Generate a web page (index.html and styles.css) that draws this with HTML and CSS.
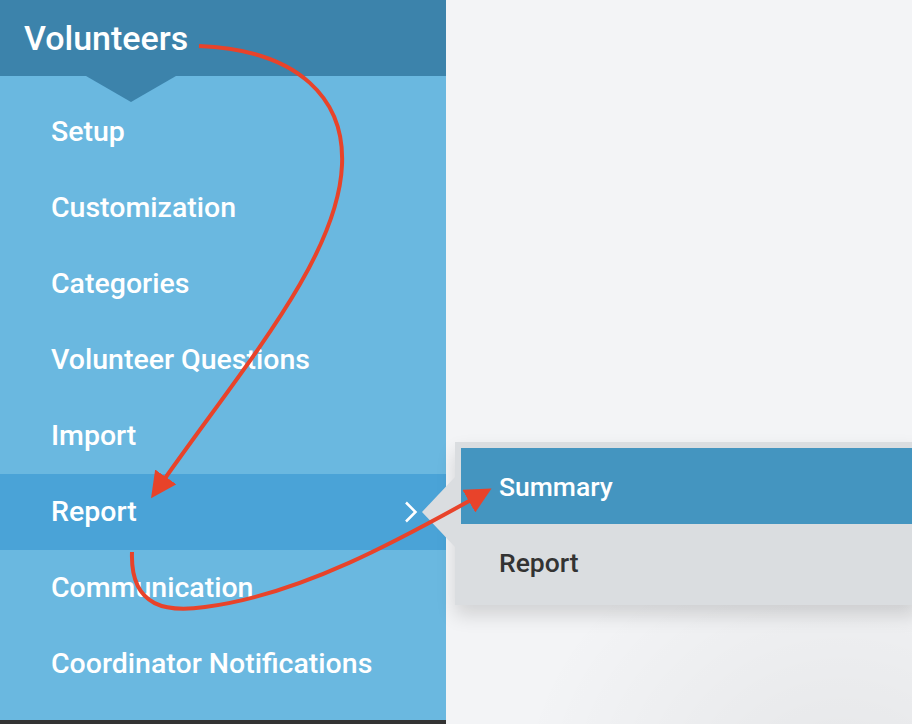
FILE: index.html
```html
<!DOCTYPE html>
<html lang="en">
<head>
    <meta charset="UTF-8">
    <meta name="viewport" content="width=device-width, initial-scale=1.0">
    <title>Volunteers</title>
    <link rel="stylesheet" href="styles.css">
</head>
<body>
    <div class="page">
        <nav class="sidebar">
            <div class="sidebar-title">Volunteers</div>
            <ul class="menu">
                <li class="menu-item">Setup</li>
                <li class="menu-item">Customization</li>
                <li class="menu-item">Categories</li>
                <li class="menu-item">Volunteer Questions</li>
                <li class="menu-item">Import</li>
                <li class="menu-item active">
                    <span>Report</span>
                    <svg class="chevron" width="14" height="24" viewBox="0 0 14 24">
                        <polyline points="2,2.5 11.5,12 2,21.5" fill="none" stroke="#fff" stroke-width="2.5"/>
                    </svg>
                </li>
                <li class="menu-item">Communication</li>
                <li class="menu-item">Coordinator Notifications</li>
            </ul>
            <div class="sidebar-foot"></div>
        </nav>
        <main class="content"></main>
    </div>

    <!-- flyout for the Report entry -->
    <div class="flyout">
        <div class="flyout-item selected">Summary</div>
        <div class="flyout-item">Report</div>
    </div>

    <!-- red hand-drawn arrows -->
    <svg class="annotations" width="912" height="724" viewBox="0 0 912 724">
        <defs>
            <marker id="head" viewBox="0 0 10 10" refX="8" refY="5" markerWidth="6.5" markerHeight="6.5" markerUnits="strokeWidth" orient="auto">
                <path d="M0,0 L10,5 L0,10 z" fill="#e8432a"/>
            </marker>
        </defs>
        <path d="M199,46 C300,50 345,100 342,165 C338,260 240,370 154,494" fill="none" stroke="#e8432a" stroke-width="4" marker-end="url(#head)"/>
        <path d="M132,552 C130,610 170,612 205,607 C300,595 400,540 487,491" fill="none" stroke="#e8432a" stroke-width="4" marker-end="url(#head)"/>
    </svg>
</body>
</html>
```

FILE: styles.css
```css
html, body {
    margin: 0;
    padding: 0;
    height: 100%;
    overflow: hidden;
    font-family: Roboto, "Noto Sans", sans-serif;
}
.page {
    display: flex;
    height: 724px;
}
.sidebar {
    width: 446px;
    flex-shrink: 0;
    background-color: #6ab8e0;
    display: flex;
    flex-direction: column;
}
.sidebar-title {
    position: relative;
    height: 76px;
    line-height: 76px;
    padding-left: 24px;
    background-color: #3c83ab;
    color: #fff;
    font-size: 34px;
    font-weight: 500;
}
/* small notch under the title bar */
.sidebar-title::after {
    content: "";
    position: absolute;
    left: 86px;
    top: 76px;
    border-left: 45px solid transparent;
    border-right: 45px solid transparent;
    border-top: 26px solid #3c83ab;
}
.menu {
    list-style: none;
    margin: 18px 0 0;
    padding: 0;
    flex: 1;
}
.menu-item {
    height: 76px;
    display: flex;
    align-items: center;
    justify-content: space-between;
    padding: 0 28px 2px 51px;
    box-sizing: border-box;
    color: #fff;
    font-size: 28.5px;
    font-weight: 500;
}
.menu-item.active {
    background-color: #4aa3d7;
}
.chevron {
    display: block;
    margin-top: 2px;
}
.sidebar-foot {
    height: 4px;
    background-color: #333;
}
.content {
    flex: 1;
    background-color: #f3f4f6;
    background-image: radial-gradient(ellipse 70% 40% at 85% 110%, rgba(0, 0, 0, 0.06), rgba(0, 0, 0, 0));
}
.flyout {
    position: absolute;
    left: 455px;
    top: 442px;
    width: 457px;
    padding: 6px 0 5px 6px;
    background-color: #dadde0;
    box-shadow: 0 10px 18px rgba(0, 0, 0, 0.14);
}
.flyout::before {
    content: "";
    position: absolute;
    left: -33px;
    top: 35px;
    border-top: 35px solid transparent;
    border-bottom: 35px solid transparent;
    border-right: 33px solid #dadde0;
}
.flyout-item {
    height: 76px;
    line-height: 78px;
    padding-left: 38px;
    font-size: 26.5px;
    font-weight: 500;
    color: #333;
}
.flyout-item.selected {
    background-color: #4495c0;
    color: #fff;
}
.annotations {
    position: absolute;
    left: 0;
    top: 0;
    pointer-events: none;
}
```
